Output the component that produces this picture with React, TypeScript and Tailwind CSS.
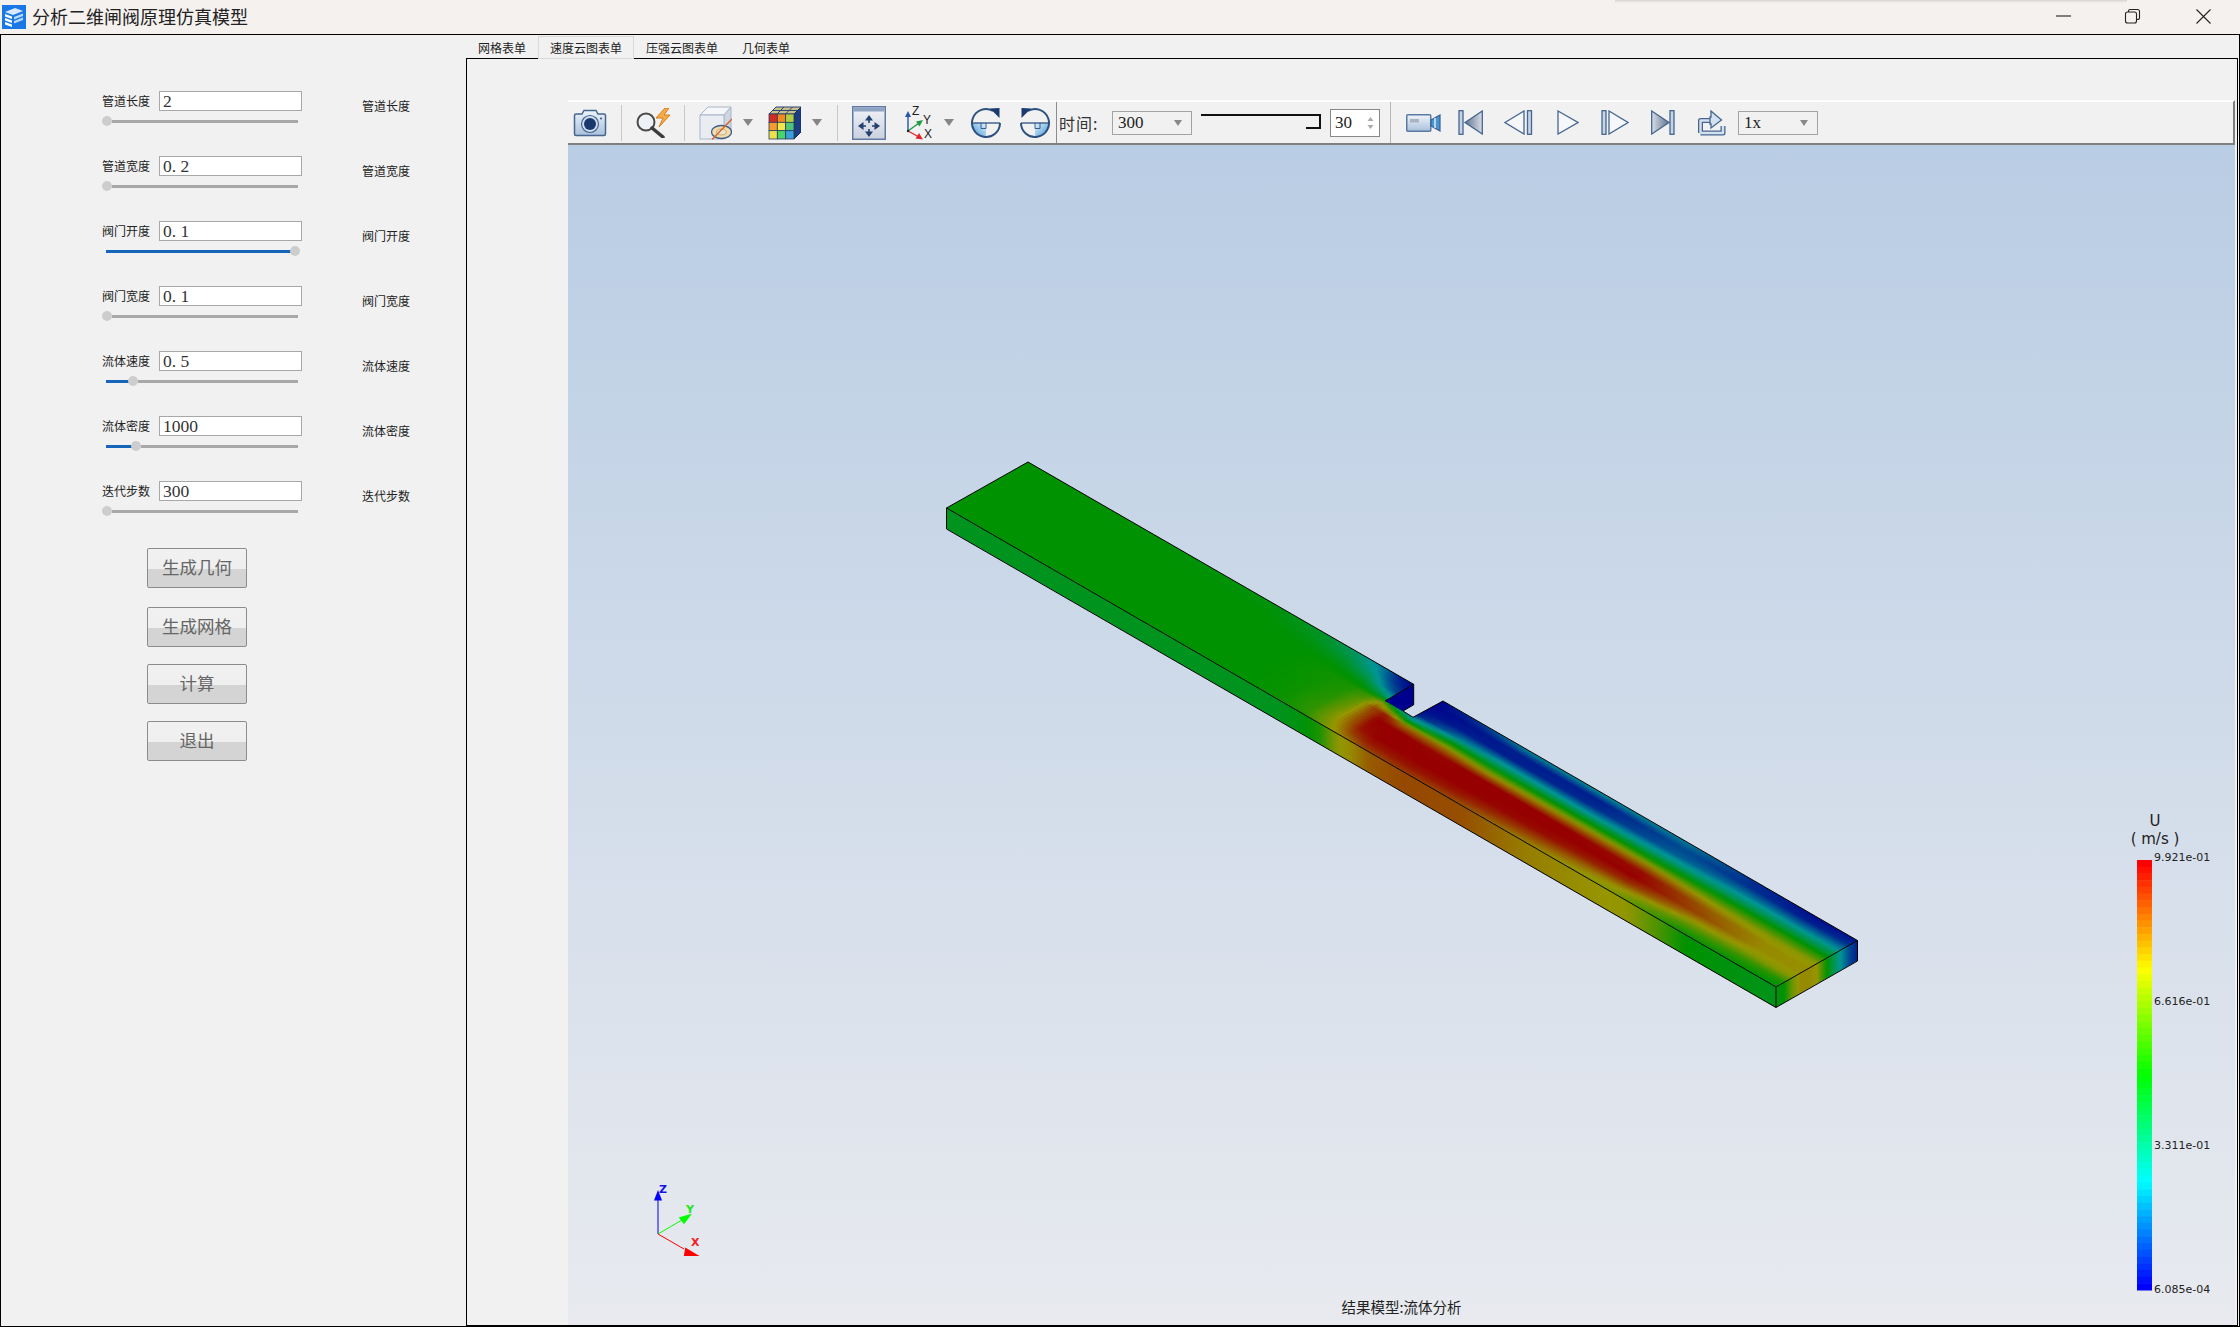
import React from "react";

// --- field on the top face: rows are u along the pipe, columns are v from the front wall to the back wall
const US = [0, 0.3, 0.36, 0.4, 0.43, 0.45, 0.465, 0.48, 0.5, 0.55, 0.6, 0.7, 0.8, 0.88, 0.95, 1];
const FIELD = [
  [0.5, 0.5, 0.5, 0.5, 0.5, 0.5, 0.5, 0.5, 0.5, 0.5, 0.5],
  [0.5, 0.5, 0.5, 0.5, 0.5, 0.5, 0.5, 0.5, 0.5, 0.49, 0.48],
  [0.5, 0.5, 0.5, 0.5, 0.5, 0.5, 0.5, 0.5, 0.48, 0.45, 0.43],
  [0.52, 0.52, 0.52, 0.52, 0.52, 0.52, 0.52, 0.5, 0.45, 0.38, 0.32],
  [0.56, 0.58, 0.58, 0.57, 0.56, 0.55, 0.54, 0.48, 0.36, 0.25, 0.18],
  [0.66, 0.7, 0.71, 0.7, 0.68, 0.66, 0.6, 0.4, 0.2, 0.1, 0.04],
  [0.74, 0.79, 0.83, 0.85, 0.86, 0.88, 0.75, 0.3, 0.1, 0.03, 0.01],
  [0.8, 0.9, 0.97, 0.99, 1, 0.96, 0.55, 0.15, 0.05, 0.02, 0.01],
  [0.88, 0.96, 1, 1, 1, 0.82, 0.32, 0.05, 0.02, 0.01, 0.01],
  [0.9, 0.97, 1, 1, 0.99, 0.82, 0.5, 0.2, 0.05, 0.03, 0.1],
  [0.88, 0.96, 1, 1, 1, 0.78, 0.47, 0.25, 0.05, 0.05, 0.22],
  [0.78, 0.88, 0.98, 1, 1, 0.8, 0.5, 0.25, 0.07, 0.05, 0.24],
  [0.7, 0.77, 0.92, 1, 0.98, 0.8, 0.52, 0.3, 0.15, 0.12, 0.2],
  [0.52, 0.62, 0.76, 0.88, 0.85, 0.74, 0.55, 0.35, 0.2, 0.08, 0.07],
  [0.5, 0.58, 0.72, 0.77, 0.77, 0.72, 0.56, 0.37, 0.2, 0.05, 0.02],
  [0.48, 0.55, 0.72, 0.76, 0.76, 0.73, 0.56, 0.38, 0.22, 0.08, 0.03],
];
const FRONT: [number, number][] = [
  [0, 0.45], [0.4, 0.45], [0.43, 0.48], [0.45, 0.55], [0.47, 0.73], [0.49, 0.78], [0.51, 0.85], [0.55, 0.88],
  [0.62, 0.87], [0.7, 0.79], [0.82, 0.74], [0.865, 0.6], [0.89, 0.5], [0.96, 0.47], [1, 0.46],
];
const END = [0.48, 0.5, 0.68, 0.77, 0.77, 0.75, 0.55, 0.38, 0.24, 0.12, 0.05];

const SHADED = [[0, 0, 140], [0, 150, 150], [0, 146, 0], [150, 150, 0], [150, 0, 0]];
function shade(s: number) {
  const t = Math.min(0.9999, Math.max(0, s)) * 4;
  const i = Math.floor(t);
  const f = t - i;
  const c = SHADED[i].map((a, k) => Math.round(a + (SHADED[i + 1][k] - a) * f));
  return `rgb(${c[0]},${c[1]},${c[2]})`;
}
function sample(u: number, v: number) {
  let r = 0;
  while (r < US.length - 2 && u > US[r + 1]) r++;
  const fu = (u - US[r]) / (US[r + 1] - US[r]);
  const p = v * 10;
  const c = Math.min(9, Math.floor(p));
  const fv = p - c;
  const a = FIELD[r][c] + (FIELD[r][c + 1] - FIELD[r][c]) * fv;
  const b = FIELD[r + 1][c] + (FIELD[r + 1][c + 1] - FIELD[r + 1][c]) * fv;
  return a + (b - a) * fu;
}
function frontAt(u: number) {
  let i = 0;
  while (i < FRONT.length - 2 && u > FRONT[i + 1][0]) i++;
  const [u0, s0] = FRONT[i];
  const [u1, s1] = FRONT[i + 1];
  return s0 + ((s1 - s0) * (u - u0)) / (u1 - u0);
}
function endAt(v: number) {
  const p = v * 10;
  const c = Math.min(9, Math.floor(p));
  return END[c] + (END[c + 1] - END[c]) * (p - c);
}

const NU = 300;
const NV = 30;
const STRIPS = Array.from({ length: NU }, (_, i) => {
  const u = (i + 0.5) / NU;
  return { id: `st${i}`, x: i / NU, stops: Array.from({ length: NV + 1 }, (_, j) => shade(sample(u, j / NV))) };
});
const RANGE = (n: number) => Array.from({ length: n + 1 }, (_, i) => i / n);

// legend bar steps
function rainbow(t: number) {
  const c = [[255, 0, 0], [255, 255, 0], [0, 255, 0], [0, 255, 255], [0, 0, 255]];
  const p = Math.min(0.9999, t) * 4;
  const i = Math.floor(p);
  const f = p - i;
  const r = c[i].map((a, k) => Math.round(a + (c[i + 1][k] - a) * f));
  return `rgb(${r[0]},${r[1]},${r[2]})`;
}

const ROWS = [
  { label: "管道长度", value: "2", fill: 0 },
  { label: "管道宽度", value: "0. 2", fill: 0 },
  { label: "阀门开度", value: "0. 1", fill: 188 },
  { label: "阀门宽度", value: "0. 1", fill: 0 },
  { label: "流体速度", value: "0. 5", fill: 26 },
  { label: "流体密度", value: "1000", fill: 29 },
  { label: "迭代步数", value: "300", fill: 0 },
];

const SERIF = "font-['Liberation_Serif','Noto_Sans_CJK_SC',serif]";

function ParamRow({ label, value, fill }: { label: string; value: string; fill: number }) {
  return (
    <div className="flex h-[65px] items-start">
      <div className="w-[200px]">
        <div className="flex h-[20px] items-center">
          <span className="w-[57px] text-[12px] text-[#222] leading-none">{label}</span>
          <div className={`flex h-[20px] w-[143px] items-center border border-[#a8a8a8] bg-white pt-[2px] pl-[3px] text-[17.5px] text-[#333] leading-none ${SERIF}`}>
            {value}
          </div>
        </div>
        <div className="mt-[5px] ml-[4px] flex h-[10px] w-[192px] items-center">
          <div className="h-[3px] shrink-0 bg-[#1565b8]" style={{ width: fill }} />
          <div className="-ml-[4px] h-[10px] w-[10px] shrink-0 rounded-full bg-[#cdcdcd]" />
          <div className="h-[3px] min-w-0 flex-1 bg-[#a8a8a8]" />
        </div>
      </div>
      <span className="mt-[5px] ml-[60px] text-[12px] text-[#222] leading-[20px]">{label}</span>
    </div>
  );
}

function ActionButton({ text, className }: { text: string; className: string }) {
  return (
    <div
      className={`flex h-[40px] w-[100px] items-center justify-center rounded-[2px] border border-[#8c8c8c] bg-[linear-gradient(#f1f1f1_0,#efefef_52%,#d4d4d4_52%,#d4d4d4_100%)] pb-[2px] text-[17.5px] text-[#666] ${className}`}
    >
      {text}
    </div>
  );
}

function Combo({ text, className }: { text: string; className: string }) {
  return (
    <div className={`flex h-[24px] w-[80px] items-center justify-between border border-[#a3a3a3] pr-[9px] pl-[5px] text-[17px] text-[#222] leading-none ${SERIF} ${className}`}>
      {text}
      <svg width="8" height="6" viewBox="0 0 8 6"><path d="M0 0H8L4 6Z" fill="#888" /></svg>
    </div>
  );
}

function Sep({ className }: { className: string }) {
  return <div className={`h-[36px] w-px shrink-0 bg-[#c9c9c9] ${className}`} />;
}

function Drop({ className }: { className: string }) {
  return (
    <svg className={`shrink-0 ${className}`} width="10" height="7" viewBox="0 0 10 7">
      <path d="M0 0H10L5 7Z" fill="#868686" />
    </svg>
  );
}

const LINE = "#46668f";

function Grads() {
  return (
    <svg width="0" height="0" className="absolute">
      <defs>
        <linearGradient id="icoBody" x1="0" y1="0" x2="0" y2="1">
          <stop offset="0" stopColor="#eef3f9" />
          <stop offset="1" stopColor="#a9c1dc" />
        </linearGradient>
        <linearGradient id="icoGray" x1="0" y1="0" x2="1" y2="0">
          <stop offset="0" stopColor="#5f7390" />
          <stop offset="1" stopColor="#d8dee6" />
        </linearGradient>
        <linearGradient id="icoGrayR" x1="1" y1="0" x2="0" y2="0">
          <stop offset="0" stopColor="#5f7390" />
          <stop offset="1" stopColor="#d8dee6" />
        </linearGradient>
        <linearGradient id="icoDisc" x1="1" y1="0" x2="0" y2="1">
          <stop offset="0" stopColor="#e4f3fc" />
          <stop offset="1" stopColor="#3f92d6" />
        </linearGradient>
        <linearGradient id="icoFit" x1="0" y1="0" x2="0" y2="1">
          <stop offset="0" stopColor="#f1f3f7" />
          <stop offset="1" stopColor="#c9d1de" />
        </linearGradient>
      </defs>
    </svg>
  );
}

function Camera({ className }: { className: string }) {
  return (
    <svg className={`shrink-0 ${className}`} width="34" height="28" viewBox="0 0 34 28">
      <path d="M1.5 6.5Q1.5 5 3 5H9L11 1.5H23L25 5H31Q32.5 5 32.5 6.5V25Q32.5 26.5 31 26.5H3Q1.5 26.5 1.5 25Z" fill="url(#icoBody)" stroke={LINE} strokeWidth="1.5" />
      <circle cx="17" cy="15" r="8.5" fill="#cfdff0" stroke={LINE} strokeWidth="1.2" />
      <circle cx="17" cy="15" r="6" fill="#1b386d" />
      <circle cx="28" cy="9.5" r="1" fill="#35507a" />
    </svg>
  );
}

function Magnifier({ className }: { className: string }) {
  return (
    <svg className={`shrink-0 ${className}`} width="34" height="30" viewBox="0 0 34 30">
      <circle cx="10" cy="14" r="8.5" fill="#eef2f6" stroke="#4a4a4a" strokeWidth="2" />
      <path d="M16 20L27 29" stroke="#3c3c3c" strokeWidth="3.5" strokeLinecap="round" />
      <path d="M29 0L20 10H27L23 19L34 7H28L33 0Z" fill="#f6ad47" stroke="#d77a1c" strokeWidth="1" />
    </svg>
  );
}

function BoxIcon({ className }: { className: string }) {
  return (
    <svg className={`shrink-0 ${className}`} width="33" height="34" viewBox="0 0 33 34">
      <path d="M1 9L9 1H32L25 9Z" fill="#f4f6f9" stroke="#a9b6c8" />
      <path d="M25 9L32 1V25L25 33Z" fill="#cdd6e2" stroke="#a9b6c8" />
      <rect x="1" y="9" width="24" height="24" fill="#e9edf2" stroke="#a9b6c8" />
      <ellipse cx="22.5" cy="26" rx="10" ry="6.5" fill="#f3dca9" stroke="#3f5f8c" strokeWidth="1.3" />
      <ellipse cx="22.5" cy="26" rx="5" ry="3" fill="#e8e4d4" stroke="#c9a96a" />
      <path d="M13 33.5L33 13" stroke="#d8622c" strokeWidth="1.4" />
    </svg>
  );
}

function CubeIcon({ className }: { className: string }) {
  const cells = ["#d42a25", "#f28a1f", "#b4cf3e", "#f59c2c", "#f0e84a", "#4cc77a", "#e9e24c", "#46d56a", "#3aa0d8"];
  return (
    <svg className={`shrink-0 ${className}`} width="33" height="34" viewBox="0 0 33 34">
      <path d="M1 8L8 1H33L26 8Z" fill="#c9c08a" stroke="#2a4478" />
      <path d="M9 8L16 1M17.5 8L24.5 1M4.5 4.5H29.5" stroke="#2a4478" fill="none" />
      <path d="M26 8L33 1V26L26 33Z" fill="#1c3d80" stroke="#16305f" />
      {cells.map((c, i) => (
        <rect key={i} x={1 + (i % 3) * 8.33} y={8 + Math.floor(i / 3) * 8.33} width="8.33" height="8.33" fill={c} stroke="#2a3c5e" strokeWidth="0.8" />
      ))}
    </svg>
  );
}

function FitIcon({ className }: { className: string }) {
  return (
    <svg className={`shrink-0 ${className}`} width="34" height="34" viewBox="0 0 34 34">
      <rect x="0.75" y="0.75" width="32.5" height="32.5" fill="url(#icoFit)" stroke="#5f7ba2" strokeWidth="1.5" />
      <rect x="1.5" y="1.5" width="31" height="4" fill="#8fa4c3" />
      <path d="M17 14V17M17 23V26M11 20H14M20 20H23" stroke="#23406e" strokeWidth="1.6" />
      <path d="M17 9L13 14.5H21ZM17 31L13 25.5H21ZM6 20L11.5 16V24ZM28 20L22.5 16V24Z" fill="#23406e" />
    </svg>
  );
}

function AxesIcon({ className }: { className: string }) {
  return (
    <svg className={`shrink-0 overflow-visible ${className}`} width="28" height="36" viewBox="0 0 28 36">
      <g transform="translate(0 1)">
        <path d="M2 25V9" stroke="#2356ad" strokeWidth="1.4" />
        <path d="M2 5L-1 11H5Z" fill="#2356ad" />
        <path d="M2 25L13 17" stroke="#1f9a46" strokeWidth="1.4" />
        <path d="M17 14L10 15.5L13.5 20.5Z" fill="#1f9a46" />
        <path d="M2 25L13 31" stroke="#e3242b" strokeWidth="1.4" />
        <path d="M17 33.5L9.5 32.5L13 27Z" fill="#e3242b" />
        <circle cx="2" cy="25" r="1.2" fill="#222" />
        <text x="6" y="9" fill="#222" fontSize="12" fontFamily="Liberation Sans">Z</text>
        <text x="17" y="18" fill="#222" fontSize="12" fontFamily="Liberation Sans">Y</text>
        <text x="18" y="32" fill="#222" fontSize="12" fontFamily="Liberation Sans">X</text>
      </g>
    </svg>
  );
}

function RotateIcon({ className, flip }: { className: string; flip?: boolean }) {
  return (
    <svg className={`shrink-0 ${flip ? "-scale-x-100" : ""} ${className}`} width="32" height="32" viewBox="0 0 32 32">
      <path d="M2 16H16V30A14 14 0 0 1 2 16Z" fill="url(#icoDisc)" />
      <path d="M2 16H30" stroke="#2c5080" strokeWidth="1.3" />
      <path d="M16 16V21.5H11V16" stroke="#2c5080" strokeWidth="0.9" fill="none" />
      <path d="M23 3.9A14 14 0 1 0 30 16" stroke="#2c5080" strokeWidth="2" fill="none" />
      <path d="M20 1.5L29.5 1V11Z" fill="#1b3b70" />
    </svg>
  );
}

function VideoIcon({ className }: { className: string }) {
  return (
    <svg className={`shrink-0 ${className}`} width="35" height="18" viewBox="0 0 35 18">
      <rect x="0.75" y="0.75" width="24" height="16.5" rx="1" fill="url(#icoBody)" stroke="#5a7aa3" strokeWidth="1.5" />
      <rect x="4" y="5" width="9" height="3.5" fill="#a8b3c2" />
      <path d="M25 6L34 1V17L25 12Z" fill="#4a94cf" stroke="#3a5f90" strokeWidth="1.2" />
      <path d="M29 4V14" stroke="#cfe6f5" strokeWidth="1.6" />
    </svg>
  );
}

function StepIcon({ kind, className }: { kind: "first" | "prev" | "play" | "next" | "last"; className: string }) {
  const stroke = { stroke: LINE, strokeWidth: 1.3 };
  if (kind === "first")
    return (
      <svg className={`shrink-0 ${className}`} width="25" height="25" viewBox="0 0 25 25">
        <rect x="1" y="0.7" width="4" height="23.6" fill="#c6d4e6" {...stroke} />
        <path d="M7 12.5L24.3 1V24Z" fill="url(#icoGray)" {...stroke} />
      </svg>
    );
  if (kind === "prev")
    return (
      <svg className={`shrink-0 ${className}`} width="29" height="25" viewBox="0 0 29 25">
        <path d="M1 12.5L20 1V24Z" fill="#f5f7fa" {...stroke} />
        <rect x="23.5" y="0.7" width="4" height="23.6" fill="#c6d4e6" {...stroke} />
      </svg>
    );
  if (kind === "play")
    return (
      <svg className={`shrink-0 ${className}`} width="22" height="25" viewBox="0 0 22 25">
        <path d="M1 1L21 12.5L1 24Z" fill="#f5f7fa" {...stroke} />
      </svg>
    );
  if (kind === "next")
    return (
      <svg className={`shrink-0 ${className}`} width="28" height="25" viewBox="0 0 28 25">
        <rect x="1" y="0.7" width="4" height="23.6" fill="#c6d4e6" {...stroke} />
        <path d="M8 1L27 12.5L8 24Z" fill="#f5f7fa" {...stroke} />
      </svg>
    );
  return (
    <svg className={`shrink-0 ${className}`} width="24" height="25" viewBox="0 0 24 25">
      <path d="M0.7 1L18 12.5L0.7 24Z" fill="url(#icoGrayR)" {...stroke} />
      <rect x="19" y="0.7" width="4" height="23.6" fill="#c6d4e6" {...stroke} />
    </svg>
  );
}

function ExportIcon({ className }: { className: string }) {
  const d = "M3.5 23V10.5H14M3.5 23H26V16";
  return (
    <svg className={`shrink-0 ${className}`} width="29" height="26" viewBox="0 0 29 26">
      <path d={d} fill="none" stroke={LINE} strokeWidth="5" strokeLinejoin="round" />
      <path d={d} fill="none" stroke="#d4e1f0" strokeWidth="2.4" strokeLinejoin="round" />
      <path d="M14 1L24.5 10L14 18V14H13V7H14Z" fill="#d4e1f0" stroke={LINE} strokeWidth="1.3" />
    </svg>
  );
}

function Toolbar() {
  return (
    <div className="flex h-[45px] shrink-0 items-center border-t-2 border-r-2 border-b-2 border-t-white border-r-[#808080] border-b-[#808080] bg-[#f1f1f1] text-[#222]">
      <Camera className="ml-[5px]" />
      <Sep className="ml-[14px]" />
      <Magnifier className="ml-[14px]" />
      <Sep className="ml-[14px]" />
      <BoxIcon className="ml-[14px]" />
      <Drop className="ml-[11px]" />
      <CubeIcon className="ml-[15px]" />
      <Drop className="ml-[11px]" />
      <Sep className="ml-[15px]" />
      <FitIcon className="ml-[14px]" />
      <AxesIcon className="ml-[20px]" />
      <Drop className="ml-[10px]" />
      <RotateIcon className="ml-[16px]" />
      <RotateIcon className="ml-[17px]" flip />
      <div className="ml-[5px] h-full w-px shrink-0 bg-[#8c8c8c]" />
      <span className="ml-[2px] w-[42px] shrink-0 text-[16px] tracking-[1px] whitespace-nowrap text-[#333]">时间:</span>
      <Combo text="300" className="ml-[11px]" />
      <div className="-mt-[3px] ml-[9px] flex h-[15px] w-[120px] shrink-0 justify-end border-t-2 border-[#111]">
        <div className="h-[13px] w-[15px] border-r-2 border-b-2 border-[#111]" />
      </div>
      <div className={`ml-[9px] flex h-[28px] w-[50px] shrink-0 items-center justify-between border border-[#888] bg-white pr-[5px] pl-[4px] text-[17px] leading-none ${SERIF}`}>
        30
        <svg width="7" height="16" viewBox="0 0 7 16"><path d="M3.5 2L6.5 6H.5ZM3.5 14L6.5 10H.5Z" fill="#aaa" /></svg>
      </div>
      <div className="ml-[10px] h-full w-px shrink-0 bg-[#b5b5b5]" />
      <VideoIcon className="ml-[15px]" />
      <StepIcon kind="first" className="ml-[17px]" />
      <StepIcon kind="prev" className="ml-[21px]" />
      <StepIcon kind="play" className="ml-[24px]" />
      <StepIcon kind="next" className="ml-[22px]" />
      <StepIcon kind="last" className="ml-[22px]" />
      <ExportIcon className="ml-[22px]" />
      <Combo text="1x" className="ml-[12px] shrink-0" />
    </div>
  );
}

// the flow result, drawn in page pixel coordinates
function Scene() {
  const topFace = "946.5,508 1028,462 1413.7,684.3 1385,701 1413,717.3 1443,701 1857.5,940.5 1776,987";
  return (
    <svg className="absolute inset-0 h-full w-full" viewBox="568 145 1667 1180" preserveAspectRatio="none">
      <defs>
        <clipPath id="topClip"><polygon points={topFace} /></clipPath>
        {STRIPS.map((s) => (
          <linearGradient key={s.id} id={s.id} x1="0" y1="0" x2="0" y2="1">
            {s.stops.map((c, j) => <stop key={j} offset={j / NV} stopColor={c} />)}
          </linearGradient>
        ))}
        <linearGradient id="frontGrad">
          {RANGE(120).map((u) => <stop key={u} offset={u} stopColor={shade(frontAt(u))} />)}
        </linearGradient>
        <linearGradient id="endGrad">
          {RANGE(40).map((v) => <stop key={v} offset={v} stopColor={shade(endAt(v))} />)}
        </linearGradient>
      </defs>

      <g transform="matrix(829.5 479 0 20.7 946.5 508)">
        <rect x="0" y="0" width="1" height="1" fill="url(#frontGrad)" />
      </g>
      <g transform="matrix(81.5 -46.5 0 20.3 1776 987)">
        <rect x="0" y="0" width="1" height="1" fill="url(#endGrad)" />
      </g>
      <polygon points="1385,701 1413.7,684.3 1413.7,704.8 1385,721.5" fill="#00008f" />
      <g clipPath="url(#topClip)">
        <g transform="matrix(829.5 479 81.5 -46.5 946.5 508)">
          {STRIPS.map((s) => (
            <rect key={s.id} x={s.x} y="0" width={1.6 / NU} height="1" fill={`url(#${s.id})`} />
          ))}
        </g>
      </g>

      <g fill="none" stroke="#000" strokeWidth="1">
        <path d="M946.5 508L1028 462L1413.7 684.3L1385 701M1413.7 684.3V704.8L1403 711L1413 717.3L1443 701L1857.5 940.5L1776 987L946.5 508V529L1776 1007.5V987M1776 1007.5L1857.5 961V940.5" />
      </g>

      {/* axis triad */}
      <path d="M658 1234V1198" stroke="#0000e0" strokeWidth="1" />
      <path d="M658 1190L654 1200.5H662Z" fill="#0000ff" />
      <path d="M658 1234L682 1220" stroke="#00ff00" strokeWidth="1" />
      <path d="M690 1215L680 1218L684 1223Z" fill="#00ff00" stroke="#00ff00" strokeWidth="1.5" />
      <path d="M658 1234L684 1249" stroke="#ff0000" strokeWidth="1" />
      <path d="M696 1255L686 1249L685 1255Z" fill="#ff0000" stroke="#ff0000" strokeWidth="2" />
      <text x="659" y="1193" fill="#1414e8" fontSize="11" fontWeight="700" fontFamily="DejaVu Sans">Z</text>
      <text x="686" y="1213" fill="#22e622" fontSize="11" fontWeight="700" fontFamily="DejaVu Sans">Y</text>
      <text x="691" y="1246" fill="#f02020" fontSize="11" fontWeight="700" fontFamily="DejaVu Sans">X</text>

      {/* legend */}
      {RANGE(63).map((t, i) => (
        <rect key={i} x="2137" y={860 + i * (430 / 64)} width="15" height={430 / 64 + 0.5} fill={rainbow(t)} />
      ))}
      <g fontFamily="DejaVu Sans" fill="#222">
        <text x="2155" y="826" fontSize="15" textAnchor="middle">U</text>
        <text x="2155" y="844" fontSize="15" textAnchor="middle">( m/s )</text>
        <text x="2154" y="861" fontSize="11">9.921e-01</text>
        <text x="2154" y="1005" fontSize="11">6.616e-01</text>
        <text x="2154" y="1149" fontSize="11">3.311e-01</text>
        <text x="2154" y="1293" fontSize="11">6.085e-04</text>
      </g>
    </svg>
  );
}

export default function App() {
  return (
    <div className="relative flex h-[1327px] w-[2240px] flex-col overflow-hidden bg-[#f5f1ef] font-['Noto_Sans_CJK_SC','Microsoft_YaHei',sans-serif]">
      <Grads />
      {/* title bar */}
      <div className="relative flex h-[34px] shrink-0 items-center">
        <svg className="ml-[2px]" width="24" height="24" viewBox="0 0 24 24">
          <rect width="24" height="24" fill="#1a78e6" />
          <path d="M3 7L13 3L21 6L11 10Z" fill="#d9e9fb" />
          <path d="M3 9L10 11.5V14L3 11.5Z M3 13L10 15.5V18L3 15.5Z M3 17L10 19.5V22L3 19.5Z" fill="#fff" />
          <path d="M12 12L21 8.5V11L12 14.5Z M12 16L21 12.5V15L12 18.5Z" fill="#bcd8f8" />
        </svg>
        <span className="ml-[6px] pb-[2px] text-[18px] leading-none text-[#222]">分析二维闸阀原理仿真模型</span>
        <div className="absolute top-0 left-[1615px] h-[3px] w-[512px] bg-[linear-gradient(#d6d4d2,#f5f1ef)]" />
        <svg className="ml-auto" width="185" height="34" viewBox="0 0 185 34">
          <g transform="translate(-2055 0)" fill="none" stroke="#222" strokeWidth="1.1">
            <path d="M2056 16H2071" />
            <rect x="2125.5" y="12" width="11" height="11" rx="2" />
            <path d="M2128.5 12V11Q2128.5 9.5 2130 9.5H2137.5Q2139.5 9.5 2139.5 11.5V18Q2139.5 19.5 2137 19.5" />
            <path d="M2196.5 9.5L2210.5 23.5M2210.5 9.5L2196.5 23.5" />
          </g>
        </svg>
      </div>

      {/* window body */}
      <div className="flex min-h-0 flex-1 border border-black bg-[#f1f1f1]">
        <div className="w-[465px] shrink-0 pt-[56px] pl-[101px]">
          {ROWS.map((r) => <ParamRow key={r.label} {...r} />)}
          <ActionButton text="生成几何" className="mt-[2px] ml-[45px]" />
          <ActionButton text="生成网格" className="mt-[19px] ml-[45px]" />
          <ActionButton text="计算" className="mt-[17px] ml-[45px]" />
          <ActionButton text="退出" className="mt-[17px] ml-[45px]" />
        </div>

        <div className="flex min-w-0 flex-1 flex-col">
          <div className="flex h-[23px] shrink-0 text-[12px] leading-none text-[#222]">
            <div className="flex w-[72px] items-center justify-center pt-[2px]">网格表单</div>
            <div className="relative z-10 mt-[1px] flex h-[23px] w-[96px] items-center justify-center border border-[#d9d9d9] bg-[#f1f1f1]">速度云图表单</div>
            <div className="flex w-[96px] items-center justify-center pt-[2px]">压强云图表单</div>
            <div className="flex w-[72px] items-center justify-center pt-[2px]">几何表单</div>
          </div>
          <div className="mr-px flex min-h-0 flex-1 flex-col border border-black bg-[#f1f1f1] pt-[41px] pr-[2px] pl-[101px]">
            <Toolbar />
            <div className="relative min-h-0 flex-1 bg-[linear-gradient(#b9cde4,#e8eaef)]">
              <Scene />
              <span className="absolute bottom-[11px] left-0 w-full text-center text-[14.5px] leading-none text-[#222]">结果模型:流体分析</span>
            </div>
          </div>
        </div>
      </div>
    </div>
  );
}
